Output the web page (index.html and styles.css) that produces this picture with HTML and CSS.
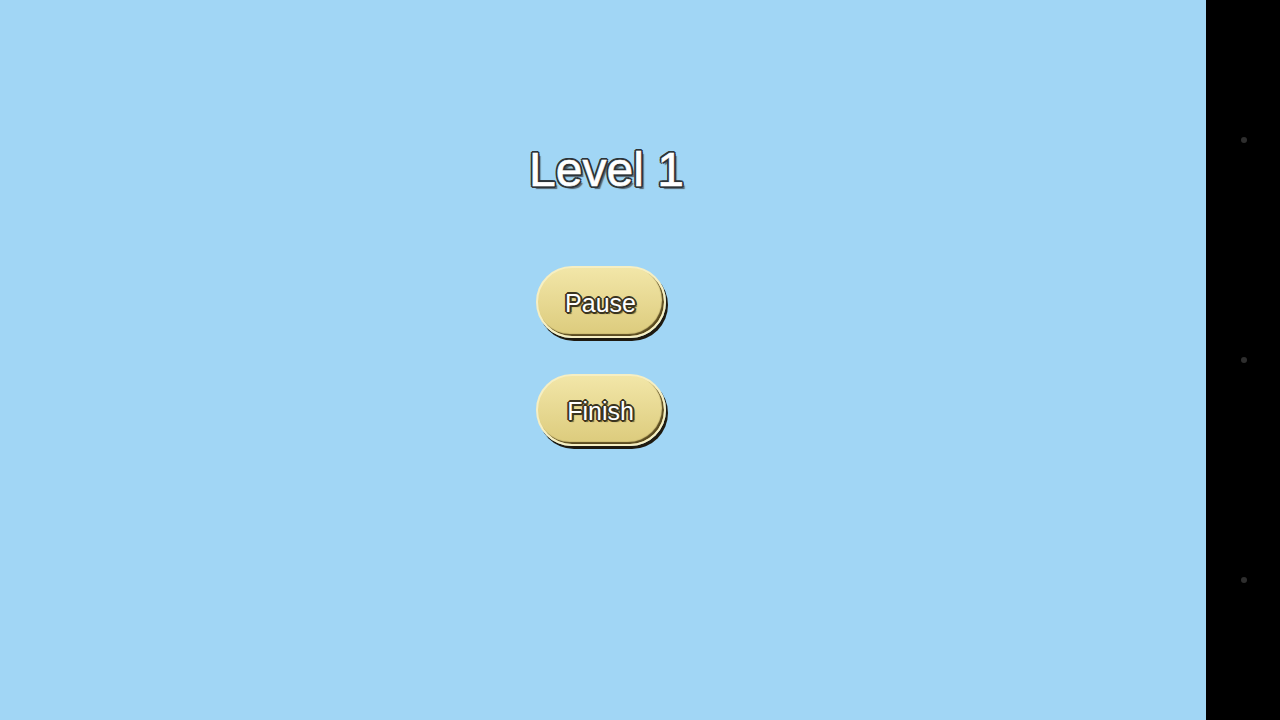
FILE: index.html
```html
<!DOCTYPE html>
<html>
<head>
<meta charset="utf-8">
<link rel="stylesheet" href="styles.css">
</head>
<body>
<div class="screen">
  <main class="stage">
    <h1 class="title">Level 1</h1>
    <div class="menu">
      <button class="btn">Pause</button>
      <button class="btn">Finish</button>
    </div>
  </main>
  <aside class="navbar">
    <span class="dot"></span>
    <span class="dot"></span>
    <span class="dot"></span>
  </aside>
</div>
</body>
</html>
```

FILE: styles.css
```css
html, body {
  margin: 0;
  padding: 0;
  width: 1280px;
  height: 720px;
  overflow: hidden;
  font-family: "Liberation Sans", Arial, sans-serif;
}

.screen {
  display: flex;
  width: 1280px;
  height: 720px;
}

.stage {
  width: 1206px;
  height: 720px;
  background: #a1d6f5;
  display: flex;
  flex-direction: column;
  align-items: center;
}

.title {
  margin: 142px 0 0 7px;
  font-size: 48px;
  line-height: 56px;
  font-weight: normal;
  color: #ffffff;
  -webkit-text-stroke: 0.6px #ffffff;
  text-shadow:
    -2px -1px 0 #2d3438,
    2px -1px 0 #2d3438,
    -2px 1px 0 #2d3438,
    2px 1px 0 #2d3438,
    -1px -2px 0 #2d3438,
    1px -2px 0 #2d3438,
    -1px 2px 0 #2d3438,
    1px 2px 0 #2d3438,
    3px 3px 1px #55636e;
}

.menu {
  margin-top: 68px;
  margin-right: 5px;
  display: flex;
  flex-direction: column;
  gap: 36px;
}

.btn {
  box-sizing: border-box;
  width: 130px;
  height: 72px;
  border-radius: 36px;
  border: 2px solid #f6efc3;
  background: linear-gradient(#f2e6a8, #dccb7c);
  box-shadow: 2px 3px 0 #1e1a10, inset -2px -2px 1px #5a4b20;
  font-family: "Liberation Sans", Arial, sans-serif;
  font-size: 25px;
  color: #ffffff;
  padding: 3px 0 0 0;
  text-shadow:
    -1px -1px 0 #3a3420,
    1px -1px 0 #3a3420,
    -1px 1px 0 #3a3420,
    1px 1px 0 #3a3420,
    0 -2px 0 #3a3420,
    0 2px 0 #3a3420,
    -2px 0 0 #3a3420,
    2px 0 0 #3a3420,
    2px 2px 1px #6a5e30;
}

.navbar {
  width: 74px;
  height: 720px;
  background: #000000;
  display: flex;
  flex-direction: column;
  align-items: center;
  padding-top: 137px;
  box-sizing: border-box;
  gap: 214px;
}

.dot {
  display: block;
  width: 6px;
  height: 6px;
  border-radius: 50%;
  background: #2e2e2e;
  margin-left: 1px;
}
```
